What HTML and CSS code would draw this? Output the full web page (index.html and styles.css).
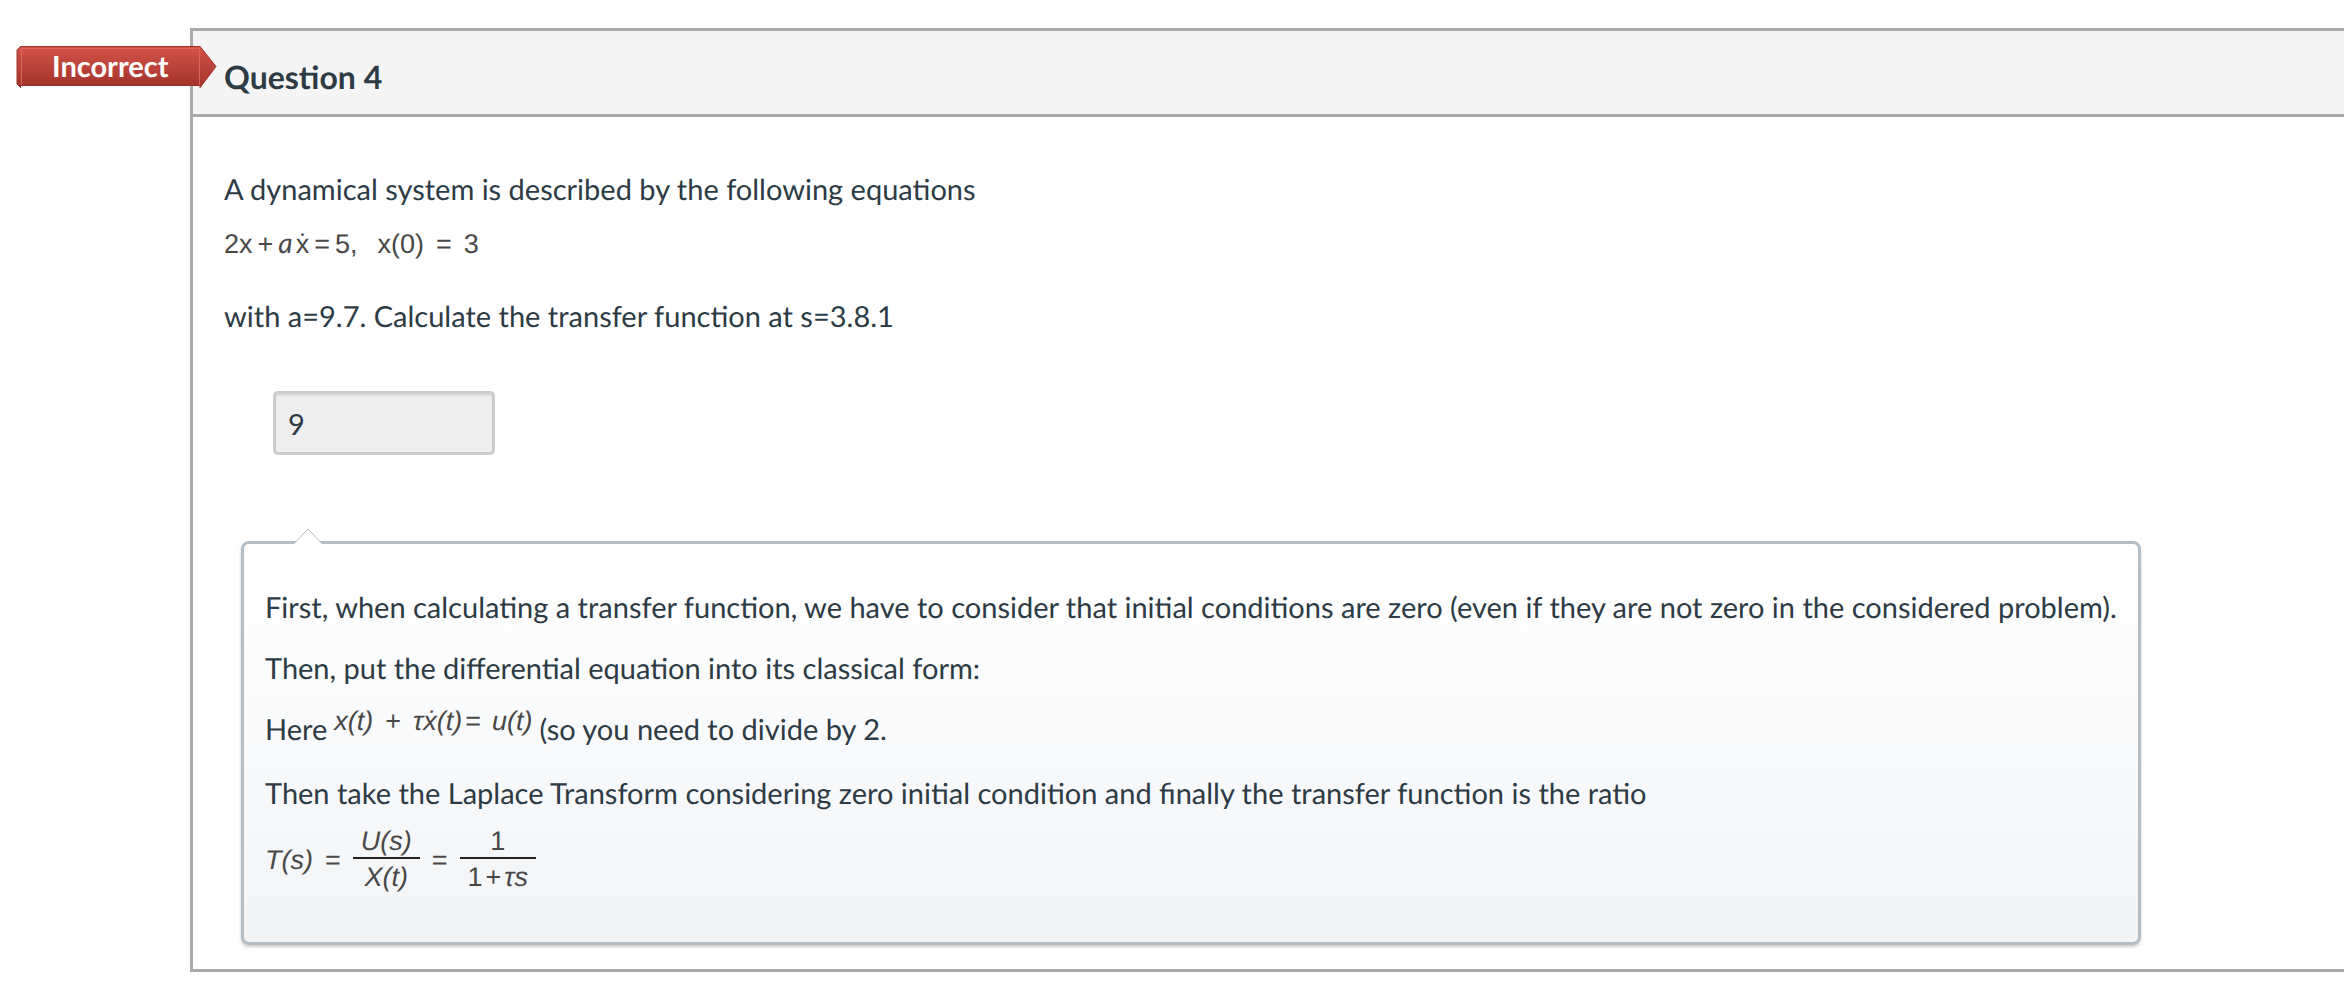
FILE: index.html
```html
<!DOCTYPE html>
<html lang="en">
<head>
<meta charset="utf-8">
<title>Question 4</title>
<link rel="stylesheet" href="styles.css">
</head>
<body>
<main class="quiz">
  <section class="question">
    <div class="badge">
      <svg class="badge-shape" viewBox="0 0 202 44" aria-hidden="true">
        <defs>
          <linearGradient id="red" x1="0" y1="0" x2="0" y2="1">
            <stop offset="0" stop-color="#d5534a"/>
            <stop offset="1" stop-color="#a1322a"/>
          </linearGradient>
        </defs>
        <path d="M5 1H184L200 21.500L184 43V41H5V43L1 39V5Z" fill="url(#red)"/>
        <path d="M5 1.500H184L200 21.500L184 42.500V41" fill="none" stroke="#a1322a"/>
        <path d="M5 1L1 5V39L5 43" fill="none" stroke="#98362f"/>
        <path d="M5 40.500H184" stroke="#98302a"/>
        <path d="M5.500 3V40M183.500 3V40M6 3.500H183" stroke="#d9655d" fill="none"/>
      </svg>
      <span class="badge-label">Incorrect</span>
    </div>
    <header class="question-header">
      <h1 class="question-title">Question 4</h1>
    </header>
    <div class="question-body">
      <p class="text" id="prompt">A dynamical system is described by the following equations</p>
      <p class="equation">
        <span>2x</span><span class="op-tight">+</span><span><i class="script-a">a</i>ẋ</span><span class="op-tight">=</span><span>5,</span><span class="term">x(0)</span><span class="op">=</span><span>3</span>
      </p>
      <p class="text">with a=9.7. Calculate the transfer function at s=3.8.1</p>
      <input class="answer" type="text" value="9" aria-labelledby="prompt" readonly>
      <aside class="feedback">
        <svg class="feedback-arrow" viewBox="0 0 30 17" aria-hidden="true">
          <path d="M1 16L15 1L29 16V17H1Z" fill="#fff"/>
          <path d="M1 15.500L15 1L29 15.500" fill="none" stroke="#b4bec6"/>
        </svg>
        <p class="text">First, when calculating a transfer function, we have to consider that initial conditions are zero (even if they are not zero in the considered problem).</p>
        <p class="text">Then, put the differential equation into its classical form:</p>
        <p class="text inline-row">
          <span>Here</span>
          <span class="equation equation-raised"><i>x(t)</i><span class="op">+</span><i>τẋ(t)</i><span class="op-close">=</span><i class="after-op">u(t)</i></span>
          <span>(so you need to divide by 2.</span>
        </p>
        <p class="text">Then take the Laplace Transform considering zero initial condition and finally the transfer function is the ratio</p>
        <div class="equation equation-display">
          <i>T(s)</i>
          <span class="op">=</span>
          <span class="fraction"><i class="numerator">U(s)</i><i class="denominator">X(t)</i></span>
          <span class="op">=</span>
          <span class="fraction"><span class="numerator">1</span><span class="denominator">1<span class="op-close">+</span><i>τs</i></span></span>
        </div>
      </aside>
    </div>
  </section>
</main>
</body>
</html>
```
FILE: styles.css
```css
* {
  box-sizing: border-box;
}

body {
  margin: 0;
  background: #fff;
  color: #2d3b45;
  font-family: Lato, "Open Sans", sans-serif;
  font-size: 29px;
  line-height: 44px;
  text-rendering: geometricPrecision;
}

.quiz {
  padding: 28px 0 24px 190px;
}

.question {
  position: relative;
  border: 3px solid #aaa;
  border-right: 0;
}

.question-header {
  padding: 24px 31px 15px;
  border-bottom: 3px solid #aaa;
  background: #f5f5f5;
}

.question-title {
  margin: 0;
  font-size: 32px;
  line-height: 44px;
  font-weight: 700;
}

.badge {
  position: absolute;
  top: 14px;
  left: -177px;
  width: 202px;
  height: 44px;
}

.badge-shape {
  display: block;
  width: 100%;
  height: 100%;
}

.badge-label {
  position: absolute;
  top: 0;
  left: 36px;
  color: #fff;
  font-size: 29px;
  line-height: 44px;
  font-weight: 700;
}

.question-body {
  display: flex;
  flex-direction: column;
  align-items: flex-start;
  padding: 51px 31px 24px;
}

.text {
  margin: 0 0 17px;
}

.equation {
  display: flex;
  align-items: baseline;
  margin: 0;
  color: #484848;
  font-family: "Liberation Sans", Arial, sans-serif;
  font-size: 27px;
  line-height: 36px;
}

.question-body > .text {
  margin-bottom: 12px;
}

.question-body > .equation {
  margin-bottom: 33px;
}

.script-a {
  margin-right: 3px;
  font-family: Lato, sans-serif;
  font-size: 28px;
  line-height: 36px;
}

.op {
  margin: 0 12px;
}

.op-tight {
  margin: 0 5px;
}

.op-close {
  margin: 0 3px;
}

.term {
  margin-left: 20px;
}

.after-op {
  margin-left: 8px;
}

.answer {
  width: 222px;
  height: 64px;
  margin: 40px 0 86px 49px;
  padding: 0 12px;
  border: 3px solid #ccc;
  border-radius: 5px;
  background: #eee;
  box-shadow: inset 0 2px 1px #ddd;
  color: inherit;
  font: inherit;
}

.feedback {
  position: relative;
  margin-left: 17px;
  padding: 42px 21px 47px;
  border: 3px solid #b4bec6;
  border-radius: 8px;
  background: linear-gradient(#fff, #f2f4f6);
  box-shadow: 0 2px 3px rgba(0, 0, 0, 0.2);
}

.feedback-arrow {
  position: absolute;
  top: -16px;
  left: 49px;
  width: 30px;
  height: 17px;
}

.inline-row {
  display: flex;
  align-items: center;
  margin-bottom: 20px;
  gap: 7px;
}

.equation-raised {
  padding-bottom: 18px;
  line-height: 26px;
}

.equation-display {
  align-items: center;
  margin-top: -8px;
}

.fraction {
  display: flex;
  flex-direction: column;
  align-items: center;
}

.numerator,
.denominator {
  padding: 0 8px;
}

.numerator {
  align-self: stretch;
  border-bottom: 2px solid #222;
  text-align: center;
  line-height: 32px;
}
```
